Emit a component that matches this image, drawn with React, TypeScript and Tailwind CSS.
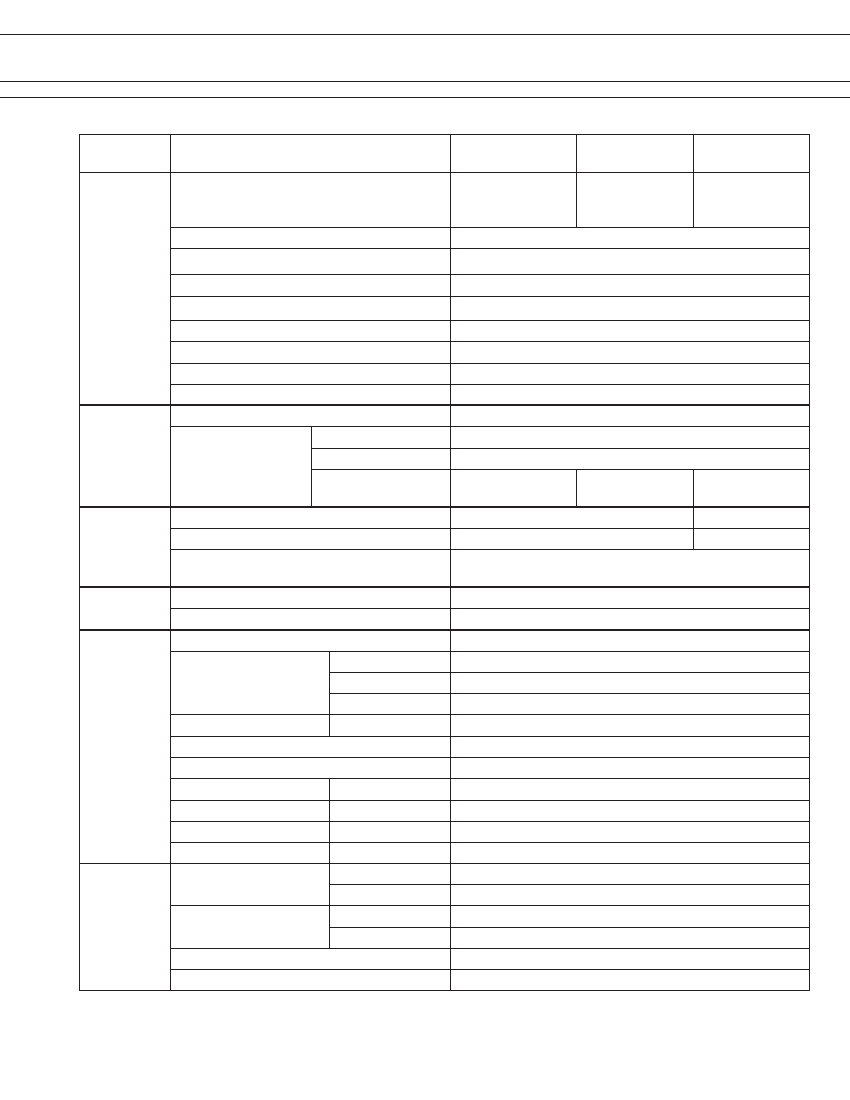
import React from 'react'

function C({ span, rows, thick }: { span?: number; rows?: number; thick?: boolean }) {
  return (
    <td
      colSpan={span}
      rowSpan={rows}
      className={`p-0 border-r border-[#231f20] ${thick ? 'border-b-2' : 'border-b'}`}
    />
  )
}

function Rule() {
  return <div className="h-px w-full bg-[#231f20]" />
}

export default function App() {
  return (
    <div className="min-h-[1100px] w-[850px] bg-white pt-[34px]">
      <Rule />
      <div className="h-[46px]" />
      <Rule />
      <div className="h-[15px]" />
      <Rule />
      <div className="h-[36px]" />

      <table className="ml-[79px] w-[731px] table-fixed border-separate border-spacing-0 border-l border-t border-[#231f20]">
        <colgroup>
          <col className="w-[91px]" />
          <col className="w-[141px]" />
          <col className="w-[18px]" />
          <col className="w-[121px]" />
          <col className="w-[126px]" />
          <col className="w-[117px]" />
          <col className="w-[116px]" />
        </colgroup>
        <tbody>
          {/* header */}
          <tr className="h-[38px]">
            <C />
            <C span={3} />
            <C />
            <C />
            <C />
          </tr>

          {/* section 1 */}
          <tr className="h-[55px]">
            <C rows={9} thick />
            <C span={3} />
            <C />
            <C />
            <C />
          </tr>
          <tr className="h-[21px]"><C span={3} /><C span={3} /></tr>
          <tr className="h-[26px]"><C span={3} /><C span={3} /></tr>
          <tr className="h-[22px]"><C span={3} /><C span={3} /></tr>
          <tr className="h-[24px]"><C span={3} /><C span={3} /></tr>
          <tr className="h-[21px]"><C span={3} /><C span={3} /></tr>
          <tr className="h-[22px]"><C span={3} /><C span={3} /></tr>
          <tr className="h-[21px]"><C span={3} /><C span={3} /></tr>
          <tr className="h-[21px]"><C span={3} thick /><C span={3} thick /></tr>

          {/* section 2 */}
          <tr className="h-[21px]">
            <C rows={4} thick />
            <C span={3} />
            <C span={3} />
          </tr>
          <tr className="h-[22px]">
            <C rows={3} thick />
            <C span={2} />
            <C span={3} />
          </tr>
          <tr className="h-[21px]"><C span={2} /><C span={3} /></tr>
          <tr className="h-[38px]">
            <C span={2} thick />
            <C thick />
            <C thick />
            <C thick />
          </tr>

          {/* section 3 */}
          <tr className="h-[21px]">
            <C rows={3} thick />
            <C span={3} />
            <C span={2} />
            <C />
          </tr>
          <tr className="h-[21px]"><C span={3} /><C span={2} /><C /></tr>
          <tr className="h-[38px]"><C span={3} thick /><C span={3} thick /></tr>

          {/* section 4 */}
          <tr className="h-[21px]">
            <C rows={2} thick />
            <C span={3} />
            <C span={3} />
          </tr>
          <tr className="h-[22px]"><C span={3} thick /><C span={3} thick /></tr>

          {/* section 5 */}
          <tr className="h-[21px]">
            <C rows={11} />
            <C span={3} />
            <C span={3} />
          </tr>
          <tr className="h-[21px]">
            <C span={2} rows={3} />
            <C />
            <C span={3} />
          </tr>
          <tr className="h-[21px]"><C /><C span={3} /></tr>
          <tr className="h-[21px]"><C /><C span={3} /></tr>
          <tr className="h-[22px]"><C span={2} /><C /><C span={3} /></tr>
          <tr className="h-[21px]"><C span={3} /><C span={3} /></tr>
          <tr className="h-[21px]"><C span={3} /><C span={3} /></tr>
          <tr className="h-[22px]"><C span={2} /><C /><C span={3} /></tr>
          <tr className="h-[21px]"><C span={2} /><C /><C span={3} /></tr>
          <tr className="h-[21px]"><C span={2} /><C /><C span={3} /></tr>
          <tr className="h-[21px]"><C span={2} /><C /><C span={3} /></tr>

          {/* section 6 */}
          <tr className="h-[21px]">
            <C rows={6} />
            <C span={2} rows={2} />
            <C />
            <C span={3} />
          </tr>
          <tr className="h-[21px]"><C /><C span={3} /></tr>
          <tr className="h-[22px]">
            <C span={2} rows={2} />
            <C />
            <C span={3} />
          </tr>
          <tr className="h-[21px]"><C /><C span={3} /></tr>
          <tr className="h-[21px]"><C span={3} /><C span={3} /></tr>
          <tr className="h-[21px]"><C span={3} /><C span={3} /></tr>
        </tbody>
      </table>
    </div>
  )
}
